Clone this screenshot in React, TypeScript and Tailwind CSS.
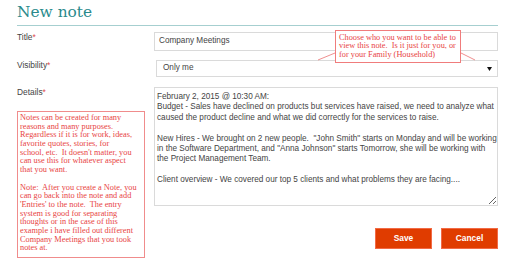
import React from 'react';

const noteLines = [
  'Notes can be created for many',
  'reasons and many purposes.',
  'Regardless if it is for work, ideas,',
  'favorite quotes, stories, for',
  "school, etc.  It doesn't matter, you",
  'can use this for whatever aspect',
  'that you want.',
  '',
  'Note:  After you create a Note, you',
  'can go back into the note and add',
  "'Entries' to the note.  The entry",
  'system is good for separating',
  'thoughts or in the case of this',
  'example i have filled out different',
  'Company Meetings that you took',
  'notes at.',
];

const details = [
  'February 2, 2015 @ 10:30 AM:',
  'Budget - Sales have declined on products but services have raised, we need to analyze what',
  'caused the product decline and what we did correctly for the services to raise.',
  '',
  'New Hires - We brought on 2 new people.  "John Smith" starts on Monday and will be working',
  'in the Software Department, and "Anna Johnson" starts Tomorrow, she will be working with',
  'the Project Management Team.',
  '',
  'Client overview - We covered our top 5 clients and what problems they are facing....',
].join('\n');

function Label({ text }: { text: string }) {
  return (
    <div className="text-[8.4px] leading-[8px] text-[#444]">
      {text}
      <span className="text-[#e04848]">*</span>
    </div>
  );
}

export default function App() {
  return (
    <div className="relative h-[260px] w-[512px] overflow-hidden bg-white font-['Liberation_Sans',Arial,sans-serif]">
      <div className="ml-[17px] w-[481px]">
        <h1 className="h-[26px] border-b border-[#a6cfd0] pt-[2px] font-['DejaVu_Serif',serif] text-[15.4px] leading-[20px] text-[#2a8a8c]">
          New note
        </h1>

        {/* title */}
        <div className="mt-[6px] flex">
          <div className="w-[137px] pt-[1px]">
            <Label text="Title" />
          </div>
          <div className="flex h-[19px] w-[344px] items-center border border-[#dadada] pl-[4px] text-[8.2px] text-[#444]">
            Company Meetings
          </div>
        </div>

        {/* visibility */}
        <div className="mt-[9px] flex">
          <div className="w-[139px] pt-[1px]">
            <Label text="Visibility" />
          </div>
          <div className="flex h-[17px] w-[342px] items-center justify-between border border-[#dadada] pl-[6px] pr-[5px] text-[8.2px] text-[#444]">
            <span>Only me</span>
            <svg width="5" height="4" viewBox="0 0 5 4">
              <path d="M0 0 L5 0 L2.5 4 Z" fill="#111" />
            </svg>
          </div>
        </div>

        {/* details */}
        <div className="mt-[10px] flex">
          <div className="w-[137px]">
            <div className="pt-[1px]">
              <Label text="Details" />
            </div>
            <div className="mt-[15px] h-[147px] w-[128px] whitespace-pre border border-[#f08c8c] pl-[2px] pt-[2px] font-['Liberation_Serif',serif] text-[8.3px] leading-[8.7px] text-[#e84444]">
              {noteLines.map((l, i) => (
                <div key={i} className="h-[8.7px]">{l}</div>
              ))}
            </div>
          </div>
          <div className="w-[344px]">
            <textarea
              readOnly
              wrap="off"
              defaultValue={details}
              className="block h-[119px] w-[344px] overflow-hidden border border-[#dadada] pl-[2px] pt-[4px] text-[8.2px] leading-[10.4px] text-[#444] outline-none font-['Liberation_Sans',Arial,sans-serif]"
            />
            <div className="mt-[22px] flex justify-end gap-[9px]">
              <button className="h-[21px] w-[57px] border border-[#f26a45] bg-[#e03c00] text-[8.4px] font-bold text-white">
                Save
              </button>
              <button className="h-[21px] w-[57px] border border-[#f26a45] bg-[#e03c00] text-[8.4px] font-bold text-white">
                Cancel
              </button>
            </div>
          </div>
        </div>
      </div>

      {/* callout for visibility */}
      <svg className="absolute left-[316px] top-[50px]" width="162" height="12" viewBox="0 0 162 12">
        <line x1="19" y1="3" x2="2" y2="10" stroke="#f09090" strokeWidth="1" />
        <line x1="145" y1="3" x2="159" y2="10" stroke="#f09090" strokeWidth="1" />
      </svg>
      <div className="absolute left-[335px] top-[30px] h-[33px] w-[126px] whitespace-pre border border-[#f07c7c] bg-white pl-[3px] pt-[3px] font-['Liberation_Serif',serif] text-[8.3px] leading-[8.3px] text-[#e84444]">
        <div>Choose who you want to be able to</div>
        <div>view this note.  Is it just for you, or</div>
        <div>for your Family (Household)</div>
      </div>
    </div>
  );
}
